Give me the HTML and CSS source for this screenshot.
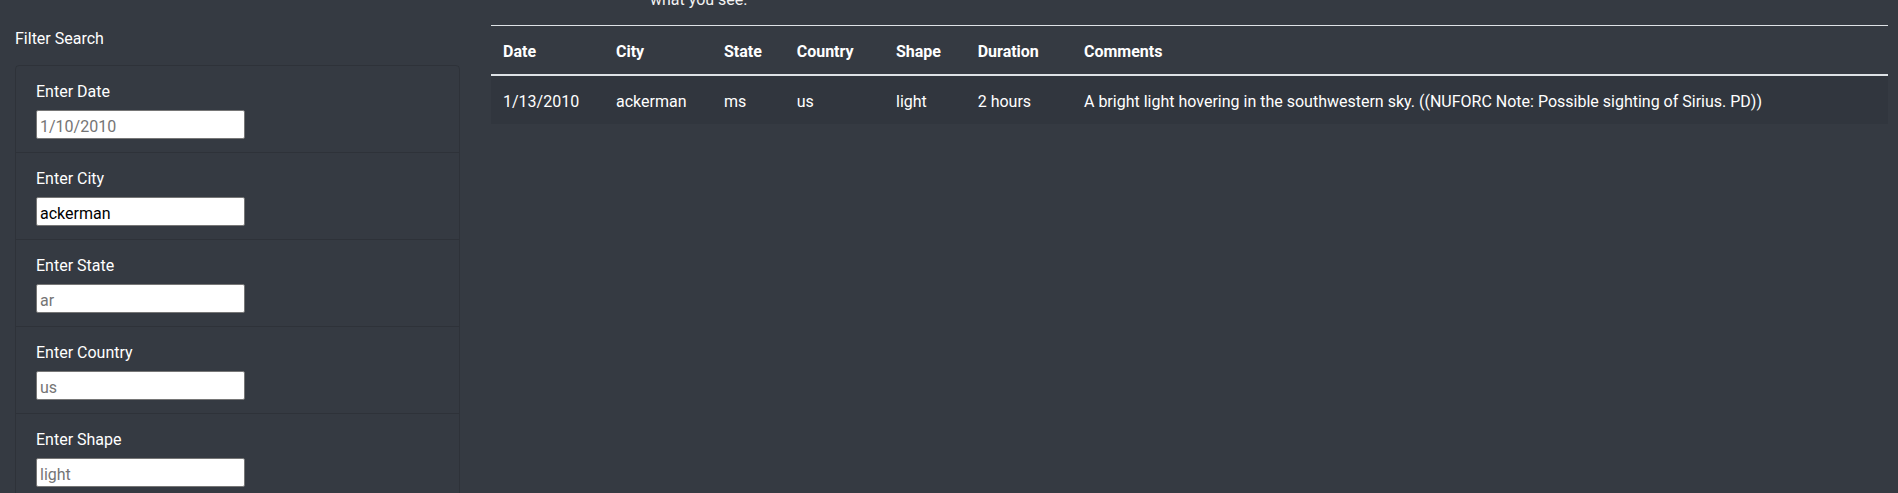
FILE: index.html
```html
<!DOCTYPE html>
<html lang="en">
<head>
<meta charset="utf-8">
<title>UFO Sightings</title>
<link rel="stylesheet" href="styles.css">
</head>
<body>
<div class="page">
  <aside class="sidebar">
    <div class="filter-title">Filter Search</div>
    <ul class="filter-card">
      <li class="filter-item">
        <label class="filter-label" for="datetime">Enter Date</label>
        <input class="filter-input" id="datetime" type="text" placeholder="1/10/2010">
      </li>
      <li class="filter-item">
        <label class="filter-label" for="city">Enter City</label>
        <input class="filter-input" id="city" type="text" value="ackerman">
      </li>
      <li class="filter-item">
        <label class="filter-label" for="state">Enter State</label>
        <input class="filter-input" id="state" type="text" placeholder="ar">
      </li>
      <li class="filter-item">
        <label class="filter-label" for="country">Enter Country</label>
        <input class="filter-input" id="country" type="text" placeholder="us">
      </li>
      <li class="filter-item">
        <label class="filter-label" for="shape">Enter Shape</label>
        <input class="filter-input" id="shape" type="text" placeholder="light">
      </li>
    </ul>
  </aside>
  <main class="content">
    <p class="intro">what you see.</p>
    <table class="ufo-table">
      <colgroup>
        <col class="c-date"><col class="c-city"><col class="c-state"><col class="c-country"><col class="c-shape"><col class="c-duration"><col class="c-comments">
      </colgroup>
      <thead>
        <tr>
          <th>Date</th><th>City</th><th>State</th><th>Country</th><th>Shape</th><th>Duration</th><th>Comments</th>
        </tr>
      </thead>
      <tbody>
        <tr>
          <td>1/13/2010</td><td>ackerman</td><td>ms</td><td>us</td><td>light</td><td>2 hours</td><td>A bright light hovering in the southwestern sky. ((NUFORC Note: Possible sighting of Sirius. PD))</td>
        </tr>
      </tbody>
    </table>
  </main>
</div>
</body>
</html>
```

FILE: styles.css
```css
html, body {
  margin: 0;
  padding: 0;
}

body {
  background: #353a42;
  color: #ffffff;
  font-family: "Segoe UI", Roboto, "Noto Sans", "Liberation Sans", Arial, sans-serif;
  font-size: 16px;
  line-height: 24px;
  height: 493px;
  overflow: hidden;
}

.page {
  display: flex;
  align-items: flex-start;
}

.sidebar {
  width: 474.5px;
  flex: none;
  box-sizing: border-box;
  padding: 26px 14.5px 0 15px;
}

.filter-title {
  font-size: 16px;
  line-height: 24px;
  padding-top: 1px;
  margin: 0 0 14px;
}

.filter-card {
  list-style: none;
  margin: 0;
  padding: 0;
  border: 1px solid rgba(0, 0, 0, 0.13);
  border-radius: 4px;
}

.filter-item {
  display: flex;
  flex-direction: column;
  align-items: flex-start;
  padding: 12px 20px 13px;
  border-top: 1px solid rgba(0, 0, 0, 0.13);
}

.filter-item:first-child {
  border-top: none;
}

.filter-label {
  display: block;
  padding-top: 2px;
  margin-bottom: 6px;
  line-height: 24px;
}

.filter-input {
  box-sizing: border-box;
  width: 209px;
  height: 29px;
  margin: 0;
  padding: 3px 3px 0;
  border: 1px solid #767676;
  border-radius: 2px;
  background: #ffffff;
  color: #000000;
  font-family: inherit;
  font-size: 16px;
  line-height: 24px;
}

.filter-input::placeholder {
  color: #757575;
  opacity: 1;
}

.content {
  flex: 1;
  min-width: 0;
  padding: 0 10px 0 16.5px;
}

.intro {
  margin: -12px 0 13px;
  padding-left: 159px;
  line-height: 24px;
  color: #f2f2f2;
}

.ufo-table {
  width: 100%;
  border-collapse: collapse;
  table-layout: fixed;
  color: #ffffff;
}

.c-date { width: 113px; }
.c-city { width: 108px; }
.c-state { width: 72.7px; }
.c-country { width: 99.3px; }
.c-shape { width: 81.7px; }
.c-duration { width: 106.3px; }

.ufo-table th {
  text-align: left;
  font-weight: 700;
  padding: 14px 12px 10px;
  line-height: 24px;
  vertical-align: bottom;
  border-top: 1px solid #dee2e6;
  border-bottom: 2px solid #dee2e6;
  white-space: nowrap;
}

.ufo-table td {
  padding: 14px 12px 10px;
  line-height: 24px;
  background: rgba(0, 0, 0, 0.06);
  white-space: nowrap;
}
```
